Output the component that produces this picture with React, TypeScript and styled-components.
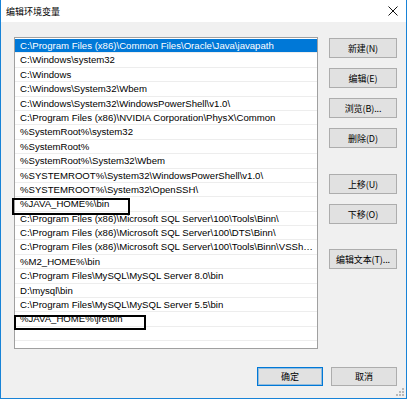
import React from 'react';
import styled, { createGlobalStyle } from 'styled-components';

const GlobalStyle = createGlobalStyle`
  html, body {
    margin: 0;
    padding: 0;
    background: #ffffff;
  }
  * {
    box-sizing: border-box;
  }
`;

const FONT = `"Noto Sans CJK SC", "Noto Sans", sans-serif`;
const LIST_FONT = `"Liberation Sans", "Noto Sans CJK SC", sans-serif`;

const paths = [
  'C:\\Program Files (x86)\\Common Files\\Oracle\\Java\\javapath',
  'C:\\Windows\\system32',
  'C:\\Windows',
  'C:\\Windows\\System32\\Wbem',
  'C:\\Windows\\System32\\WindowsPowerShell\\v1.0\\',
  'C:\\Program Files (x86)\\NVIDIA Corporation\\PhysX\\Common',
  '%SystemRoot%\\system32',
  '%SystemRoot%',
  '%SystemRoot%\\System32\\Wbem',
  '%SYSTEMROOT%\\System32\\WindowsPowerShell\\v1.0\\',
  '%SYSTEMROOT%\\System32\\OpenSSH\\',
  '%JAVA_HOME%\\bin',
  'C:\\Program Files (x86)\\Microsoft SQL Server\\100\\Tools\\Binn\\',
  'C:\\Program Files (x86)\\Microsoft SQL Server\\100\\DTS\\Binn\\',
  'C:\\Program Files (x86)\\Microsoft SQL Server\\100\\Tools\\Binn\\VSShell\\Common7\\IDE\\',
  '%M2_HOME%\\bin',
  'C:\\Program Files\\MySQL\\MySQL Server 8.0\\bin',
  'D:\\mysql\\bin',
  'C:\\Program Files\\MySQL\\MySQL Server 5.5\\bin',
  '%JAVA_HOME%\\jre\\bin',
  '',
  '',
];

const sideButtons = [
  { label: '新建(N)', space: 0 },
  { label: '编辑(E)', space: 10 },
  { label: '浏览(B)...', space: 10 },
  { label: '删除(D)', space: 10 },
  { label: '上移(U)', space: 26 },
  { label: '下移(O)', space: 10 },
  { label: '编辑文本(T)...', space: 25 },
];

const Window = styled.div`
  position: relative;
  width: 407px;
  height: 399px;
  display: flex;
  flex-direction: column;
  border-left: 1px solid #1883d7;
  border-right: 1px solid #1883d7;
  border-bottom: 1px solid #1883d7;
  font-family: ${FONT};
  color: #000;
`;

const TitleBar = styled.div`
  height: 22px;
  flex: none;
  background: #fff;
  display: flex;
  align-items: center;
  justify-content: space-between;
  padding: 0 8px 0 5px;
`;

const Title = styled.span`
  font-size: 9px;
  line-height: 1;
`;

const Body = styled.div`
  flex: 1;
  background: #f0f0f0;
  padding: 15px 9px 0 13px;
  display: flex;
  flex-direction: column;
`;

const Main = styled.div`
  display: flex;
  gap: 11px;
`;

const ListBox = styled.div`
  position: relative;
  width: 304px;
  height: 312px;
  border: 1px solid #a0a0a0;
  background: #fff;
  padding-top: 1px;
`;

const Rows = styled.div`
  height: 100%;
  overflow: hidden;
`;

const Row = styled.div<{ $selected?: boolean }>`
  height: 14.4px;
  border-bottom: 1px solid #ededed;
  padding: 0 2px 0 5px;
  font-family: ${LIST_FONT};
  font-size: 9.6px;
  line-height: 13.4px;
  white-space: nowrap;
  overflow: hidden;
  text-overflow: ellipsis;
  background: ${p => (p.$selected ? '#0078d7' : 'transparent')};
  color: ${p => (p.$selected ? '#fff' : '#000')};
`;

const Mark = styled.div<{ $left: number; $top: number; $w: number; $h: number }>`
  position: absolute;
  left: ${p => p.$left}px;
  top: ${p => p.$top}px;
  width: ${p => p.$w}px;
  height: ${p => p.$h}px;
  border: 2px solid #000;
  pointer-events: none;
`;

const ButtonColumn = styled.div`
  display: flex;
  flex-direction: column;
  padding-top: 1px;
  width: 68px;
`;

const Button = styled.div<{ $space?: number; $default?: boolean }>`
  height: 20px;
  margin-top: ${p => p.$space ?? 0}px;
  background: #e1e1e1;
  border: 1px solid ${p => (p.$default ? '#0078d7' : '#adadad')};
  box-shadow: ${p => (p.$default ? 'inset 0 0 0 1px rgba(0, 120, 215, 0.35)' : 'none')};
  display: flex;
  align-items: center;
  justify-content: center;
  font-size: 9px;
  line-height: 1;
  white-space: nowrap;
  letter-spacing: -0.1px;
`;

const Footer = styled.div`
  display: flex;
  justify-content: flex-end;
  gap: 8px;
  margin-top: 18px;
`;

const FooterButton = styled(Button)`
  height: 19px;
  width: 66px;
`;

const Grip = styled.svg`
  position: absolute;
  right: 1px;
  bottom: 1px;
`;

export default function App() {
  return (
    <>
      <GlobalStyle />
      <Window>
        <TitleBar>
          <Title>编辑环境变量</Title>
          <svg width="10" height="10" viewBox="0 0 10 10">
            <path d="M0.5 0.5 L9.5 9.5 M9.5 0.5 L0.5 9.5" stroke="#111" strokeWidth="1" />
          </svg>
        </TitleBar>
        <Body>
          <Main>
            <ListBox>
              <Rows>
                {paths.map((p, i) => (
                  <Row key={i} $selected={i === 0}>
                    {p}
                  </Row>
                ))}
              </Rows>
              <Mark $left={-3} $top={160} $w={118} $h={17} />
              <Mark $left={-1} $top={277} $w={132} $h={15} />
            </ListBox>
            <ButtonColumn>
              {sideButtons.map(b => (
                <Button key={b.label} $space={b.space}>
                  {b.label}
                </Button>
              ))}
            </ButtonColumn>
          </Main>
          <Footer>
            <FooterButton $default>确定</FooterButton>
            <FooterButton>取消</FooterButton>
          </Footer>
        </Body>
        <Grip width="9" height="9" viewBox="0 0 9 9">
          <rect x="6" y="0" width="2" height="2" fill="#b8b8b8" />
          <rect x="3" y="3" width="2" height="2" fill="#b8b8b8" />
          <rect x="6" y="3" width="2" height="2" fill="#b8b8b8" />
          <rect x="0" y="6" width="2" height="2" fill="#b8b8b8" />
          <rect x="3" y="6" width="2" height="2" fill="#b8b8b8" />
          <rect x="6" y="6" width="2" height="2" fill="#b8b8b8" />
        </Grip>
      </Window>
    </>
  );
}
